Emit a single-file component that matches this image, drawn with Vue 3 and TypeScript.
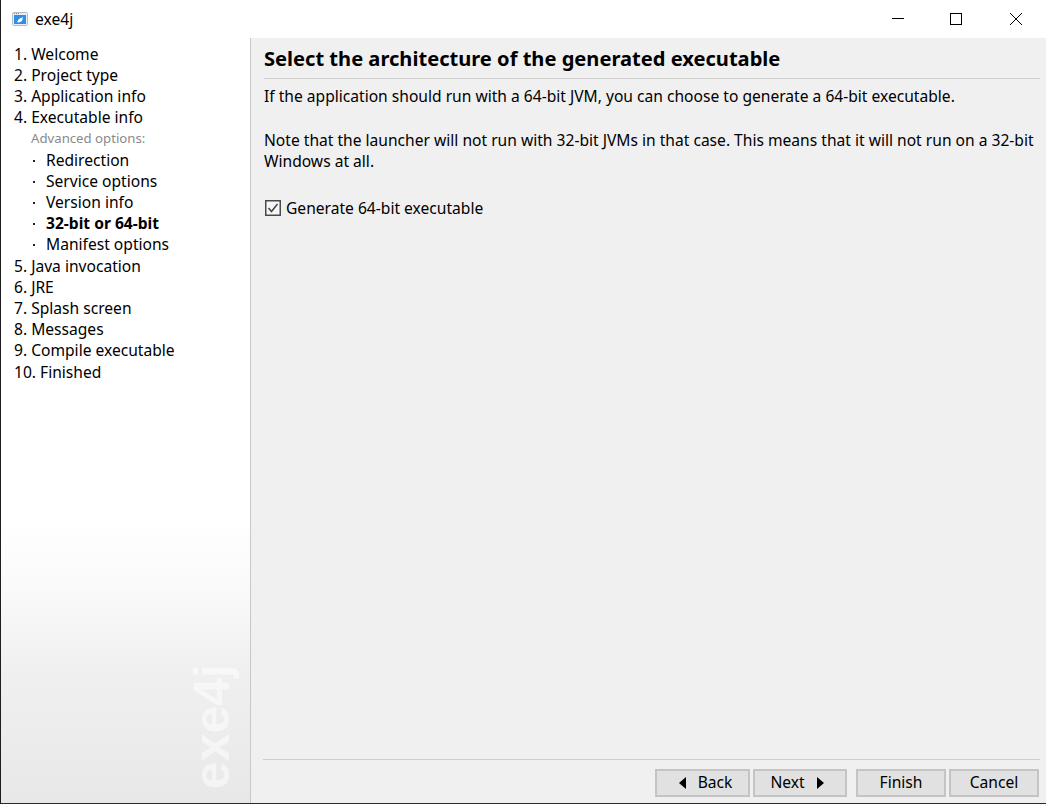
<script setup lang="ts">
interface Step { label: string; kind: 'main' | 'note' | 'sub' | 'active' }
const steps: Step[] = [
  { label: '1. Welcome', kind: 'main' },
  { label: '2. Project type', kind: 'main' },
  { label: '3. Application info', kind: 'main' },
  { label: '4. Executable info', kind: 'main' },
  { label: 'Advanced options:', kind: 'note' },
  { label: 'Redirection', kind: 'sub' },
  { label: 'Service options', kind: 'sub' },
  { label: 'Version info', kind: 'sub' },
  { label: '32-bit or 64-bit', kind: 'active' },
  { label: 'Manifest options', kind: 'sub' },
  { label: '5. Java invocation', kind: 'main' },
  { label: '6. JRE', kind: 'main' },
  { label: '7. Splash screen', kind: 'main' },
  { label: '8. Messages', kind: 'main' },
  { label: '9. Compile executable', kind: 'main' },
  { label: '10. Finished', kind: 'main' }
]
</script>

<template>
  <div class="window">
    <header class="titlebar">
      <svg class="app-icon" width="16" height="14" viewBox="0 0 16 14">
        <rect x="0.5" y="0.5" width="15" height="13" rx="1" fill="#e8eef4" stroke="#b4bcc6" />
        <rect x="2" y="3" width="12" height="9" fill="#2f8fe6" />
        <path d="M2 1.5h1M4 1.5h1M6 1.5h1" stroke="#e8603c" />
        <path d="M5 10l2-3 4-2-1 4-3 1.5z" fill="#ffffff" />
      </svg>
      <span class="app-name">exe4j</span>
      <div class="controls">
        <svg class="ctl min" width="12" height="12" viewBox="0 0 12 12"><path d="M0 5.5h12" stroke="#000" /></svg>
        <svg class="ctl" width="12" height="12" viewBox="0 0 12 12"><rect x="0.5" y="0.5" width="11" height="11" fill="none" stroke="#000" /></svg>
        <svg class="ctl" width="14" height="14" viewBox="0 0 14 14"><path d="M1 1l12 12M13 1L1 13" stroke="#000" stroke-width="1" /></svg>
      </div>
    </header>

    <div class="body">
      <aside class="sidebar">
        <ul class="steps">
          <li v-for="s in steps" :key="s.label" :class="['step', s.kind]">
            <span v-if="s.kind === 'sub' || s.kind === 'active'" class="dot"></span>
            {{ s.label }}
          </li>
        </ul>
        <div class="watermark">exe4j</div>
      </aside>

      <main class="content">
        <h1 class="heading">Select the architecture of the generated executable</h1>
        <p class="para first">If the application should run with a 64-bit JVM, you can choose to generate a 64-bit executable.</p>
        <p class="para second">Note that the launcher will not run with 32-bit JVMs in that case. This means that it will not run on a 32-bit Windows at all.</p>
        <label class="check">
          <svg width="16" height="16" viewBox="0 0 16 16">
            <rect x="0.75" y="0.75" width="14.5" height="14.5" fill="#f6f6f6" stroke="#4a4a4a" stroke-width="1.5" />
            <path d="M3.5 8l3 3.5L12.5 4" fill="none" stroke="#444" stroke-width="1.5" />
          </svg>
          <span>Generate 64-bit executable</span>
        </label>
        <div class="spacer"></div>
        <footer class="footer">
          <div class="btn-group">
            <button class="btn nav back">
              <svg width="8" height="12" viewBox="0 0 8 12"><path d="M7 0v12L0 6z" fill="#000" /></svg>
              <span>Back</span>
            </button>
            <button class="btn nav next">
              <span>Next</span>
              <svg width="8" height="12" viewBox="0 0 8 12"><path d="M1 0v12l7-6z" fill="#000" /></svg>
            </button>
          </div>
          <div class="btn-group">
            <button class="btn finish">Finish</button>
            <button class="btn cancel">Cancel</button>
          </div>
        </footer>
      </main>
    </div>
  </div>
</template>

<style>
html, body { margin: 0; padding: 0; background: #fff; }
</style>

<style scoped>
.window {
  width: 1046px;
  height: 804px;
  box-sizing: border-box;
  border-left: 1px solid #1f1f1f;
  border-bottom: 1px solid #2a2a2a;
  display: flex;
  flex-direction: column;
  font-family: "Noto Sans", "Open Sans", sans-serif;
  font-size: 15.6px;
  color: #000;
  overflow: hidden;
}
.titlebar {
  height: 38px;
  flex: none;
  background: #fff;
  display: flex;
  align-items: center;
  padding-left: 11px;
}
.app-icon { margin-right: 7px; margin-top: -1px; }
.app-name { font-size: 15.6px; }
.controls { margin-left: auto; display: flex; align-items: center; }
.ctl { width: 60px; }
.min { margin: 0 -2px 0 2px; }
.body { flex: 1; display: flex; min-height: 0; }
.sidebar {
  position: relative;
  width: 249px;
  flex: none;
  box-sizing: border-box;
  background: linear-gradient(to bottom, #fff 0, #fff 480px, #f9f9f9 562px, #f0f0f0 629px, #e8e8e8 100%);
  overflow: hidden;
}
.steps { list-style: none; margin: 0; padding: 5.7px 0 0 13px; }
.step { height: 21.2px; line-height: 21.2px; white-space: nowrap; }
.note { color: #8a8a8a; font-size: 13.2px; padding-left: 17px; }
.sub, .active { position: relative; padding-left: 32px; }
.active { font-weight: 700; }
.dot {
  position: absolute;
  left: 19px;
  top: 10px;
  width: 2px;
  height: 2px;
  background: #222;
}
.watermark {
  position: absolute;
  left: 186px;
  bottom: 14px;
  writing-mode: vertical-rl;
  transform: rotate(180deg);
  font-family: "Liberation Sans", sans-serif;
  font-weight: 700;
  font-size: 50px;
  line-height: 50px;
  color: rgba(255, 255, 255, 0.5);
}
.content {
  flex: 1;
  min-width: 0;
  background: #f0f0f0;
  border-left: 1px solid #c8c8c8;
  padding: 0 6px 0 13px;
  display: flex;
  flex-direction: column;
}
.heading {
  margin: 0;
  height: 41px;
  line-height: 42px;
  font-size: 20.1px;
  font-weight: 700;
  border-bottom: 1px solid #cfcfcf;
  box-sizing: border-box;
}
.para { margin: 0; line-height: 21.5px; }
.first { margin-top: 7px; }
.second { margin-top: 22px; }
.check { display: flex; align-items: center; gap: 5px; margin-top: 24px; padding-left: 1px; }
.check svg { flex: none; }
.spacer { flex: 1; }
.footer {
  height: 44px;
  flex: none;
  border-top: 1px solid #cfcfcf;
  display: flex;
  justify-content: flex-end;
  gap: 9px;
  padding: 9px 1px 0 0;
  margin-left: -1px;
  box-sizing: border-box;
}
.btn-group { display: flex; gap: 3px; }
.btn {
  height: 28px;
  box-sizing: border-box;
  border: 2px solid #c4c4c4;
  background: #e1e1e1;
  font: inherit;
  line-height: 20px;
  color: #000;
  padding: 0 0 2px;
  display: flex;
  align-items: center;
  justify-content: center;
  gap: 11px;
}
.btn svg { margin-top: 1px; }
.nav { width: 95px; }
.back { padding-left: 6px; }
.next { width: 94px; padding-right: 6px; }
.finish { width: 90px; }
.cancel { width: 90px; }
</style>
